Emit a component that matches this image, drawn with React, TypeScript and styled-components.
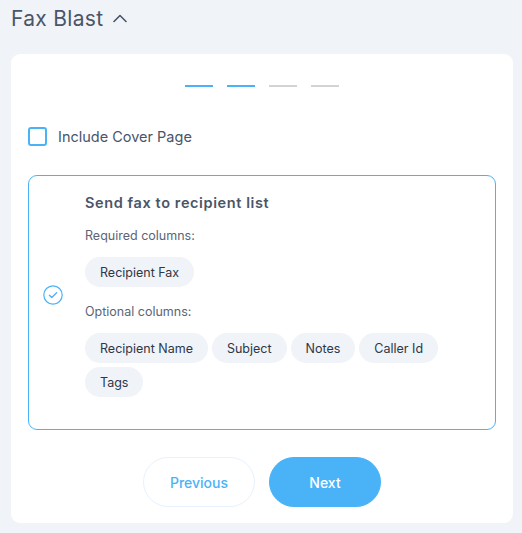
import React from 'react';
import styled, { createGlobalStyle } from 'styled-components';

const GlobalStyle = createGlobalStyle`
  html, body {
    margin: 0;
    padding: 0;
    background: #f0f3f8;
    font-family: Inter, "Open Sans", sans-serif;
  }
`;

const Page = styled.div`
  width: 522px;
  height: 533px;
  box-sizing: border-box;
  padding: 3px 9px 0 11px;
  display: flex;
  flex-direction: column;
`;

const Heading = styled.div`
  display: flex;
  align-items: center;
  gap: 10px;
  height: 30px;
  color: #4a5568;
  font-size: 21px;
  font-weight: 400;
  letter-spacing: 0.3px;
`;

const Card = styled.div`
  margin-top: 21px;
  background: #ffffff;
  border-radius: 9px;
  padding: 31px 17px 16px 17px;
  display: flex;
  flex-direction: column;
`;

const Steps = styled.div`
  display: flex;
  justify-content: center;
  gap: 14px;
`;

const Step = styled.div<{ $active?: boolean }>`
  width: 28px;
  height: 2px;
  background: ${p => (p.$active ? '#4ab3f8' : '#d3d3d3')};
`;

const CheckRow = styled.label`
  margin-top: 40px;
  display: flex;
  align-items: center;
  gap: 11px;
  color: #4a5568;
  font-size: 14.5px;
`;

const Box = styled.span`
  width: 15px;
  height: 15px;
  border: 2px solid #4ab3f8;
  border-radius: 3px;
`;

const Option = styled.div`
  margin-top: 29px;
  border: 1px solid #4ab3f8;
  border-radius: 9px;
  padding: 17px 16px 32px 14px;
  display: flex;
  align-items: center;
  gap: 22px;
`;

const Content = styled.div`
  display: flex;
  flex-direction: column;
  flex: 1;
`;

const OptionTitle = styled.div`
  color: #4a5568;
  font-size: 14.5px;
  font-weight: 600;
  letter-spacing: 0.6px;
  line-height: 20px;
`;

const Label = styled.div<{ $gap: number }>`
  margin-top: ${p => p.$gap}px;
  color: #5a6577;
  font-size: 12.5px;
  line-height: 18px;
`;

const Chips = styled.div`
  margin-top: 12px;
  display: flex;
  flex-wrap: wrap;
  gap: 4px 4px;
`;

const Chip = styled.span`
  height: 30px;
  padding: 0 15px;
  border-radius: 15px;
  background: #f0f3f8;
  color: #2d3748;
  font-size: 12.5px;
  display: inline-flex;
  align-items: center;
`;

const Actions = styled.div`
  margin-top: 27px;
  display: flex;
  justify-content: center;
  gap: 14px;
`;

const Button = styled.button<{ $primary?: boolean }>`
  width: 112px;
  height: 50px;
  border-radius: 25px;
  font-family: inherit;
  font-size: 14px;
  font-weight: 500;
  border: 1px solid ${p => (p.$primary ? '#4ab3f8' : '#e6f2fd')};
  background: ${p => (p.$primary ? '#4ab3f8' : '#ffffff')};
  color: ${p => (p.$primary ? '#ffffff' : '#4ab3f8')};
  cursor: pointer;
`;

const ChevronUp = () => (
  <svg width="14" height="9" viewBox="0 0 14 9" fill="none">
    <path d="M1 7.5L7 1.5L13 7.5" stroke="#4a5568" strokeWidth="1.6" strokeLinecap="round" strokeLinejoin="round" />
  </svg>
);

const CheckCircle = () => (
  <svg width="20" height="20" viewBox="0 0 20 20" fill="none">
    <circle cx="10" cy="10" r="9.2" stroke="#4ab3f8" strokeWidth="1.2" />
    <path d="M6.4 10.2L8.8 12.5L13.6 7.8" stroke="#4ab3f8" strokeWidth="1.3" strokeLinecap="round" strokeLinejoin="round" />
  </svg>
);

const required = ['Recipient Fax'];
const optional = ['Recipient Name', 'Subject', 'Notes', 'Caller Id', 'Tags'];

export default function App() {
  return (
    <>
      <GlobalStyle />
      <Page>
        <Heading>
          Fax Blast
          <ChevronUp />
        </Heading>
        <Card>
          <Steps>
            <Step $active />
            <Step $active />
            <Step />
            <Step />
          </Steps>
          <CheckRow>
            <Box />
            Include Cover Page
          </CheckRow>
          <Option>
            <CheckCircle />
            <Content>
              <OptionTitle>Send fax to recipient list</OptionTitle>
              <Label $gap={14}>Required columns:</Label>
              <Chips>
                {required.map(c => (
                  <Chip key={c}>{c}</Chip>
                ))}
              </Chips>
              <Label $gap={16}>Optional columns:</Label>
              <Chips>
                {optional.map(c => (
                  <Chip key={c}>{c}</Chip>
                ))}
              </Chips>
            </Content>
          </Option>
          <Actions>
            <Button>Previous</Button>
            <Button $primary>Next</Button>
          </Actions>
        </Card>
      </Page>
    </>
  );
}
